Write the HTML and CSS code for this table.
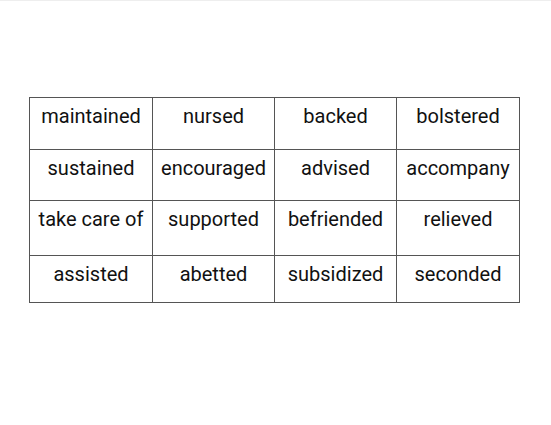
FILE: index.html
```html
<!DOCTYPE html>
<html>
<head>
<meta charset="utf-8">
<link rel="stylesheet" href="styles.css">
</head>
<body>
<div class="page">
<table class="words">
  <colgroup><col class="c1"><col class="c2"><col class="c3"><col class="c4"></colgroup>
  <tr class="r1"><td>maintained</td><td>nursed</td><td>backed</td><td>bolstered</td></tr>
  <tr class="r2"><td>sustained</td><td>encouraged</td><td>advised</td><td>accompany</td></tr>
  <tr class="r3"><td>take care of</td><td>supported</td><td>befriended</td><td>relieved</td></tr>
  <tr class="r4"><td>assisted</td><td>abetted</td><td>subsidized</td><td>seconded</td></tr>
</table>
</div>
</body>
</html>
```
FILE: styles.css
```css
html, body {
  margin: 0;
  padding: 0;
  background: #fff;
}
.page {
  border-top: 1px solid #eeeeee;
  padding: 96px 0 0 29px;
  height: 424px;
  box-sizing: border-box;
}
.words {
  border-collapse: collapse;
  font-family: Roboto, "Noto Sans", sans-serif;
  font-size: 20px;
  color: #111;
  table-layout: fixed;
  width: 491px;
}
.c1, .c4 { width: 123px; }
.c2, .c3 { width: 122px; }
.words td {
  border: 1px solid #555;
  text-align: center;
  vertical-align: top;
  padding: 6px 0 0 0;
  box-sizing: border-box;
  white-space: nowrap;
}
.r1 td { height: 52px; }
.r2 td { height: 51px; }
.r3 td { height: 55px; }
.r4 td { height: 47px; }
```
